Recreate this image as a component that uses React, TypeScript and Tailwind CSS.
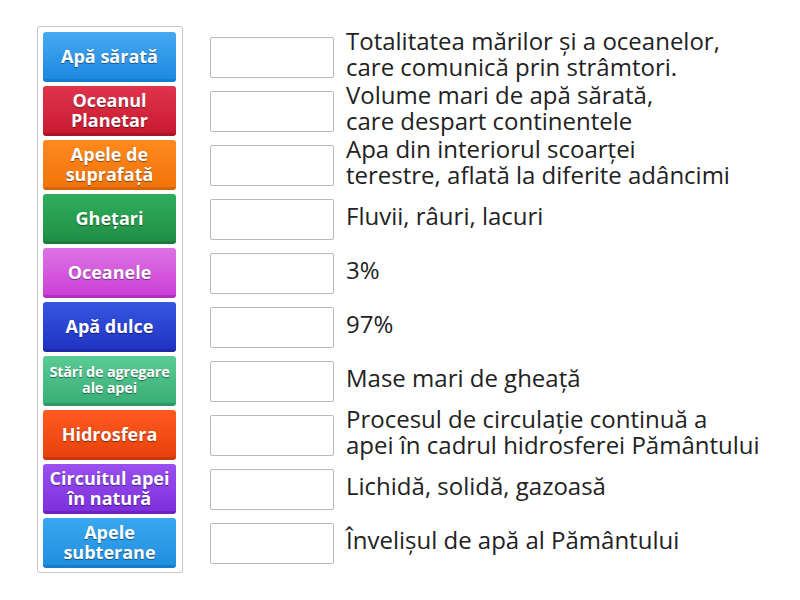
const tiles = [
  { label: "Apă sărată", cls: "from-[#46a9f2] to-[#1c8ae0] border-[#157cd0]" },
  { label: "Oceanul Planetar", cls: "from-[#e0344e] to-[#c8192f] border-[#a9142a]" },
  { label: "Apele de suprafață", cls: "from-[#ff8a1e] to-[#f27408] border-[#d66306]" },
  { label: "Ghețari", cls: "from-[#2fae5c] to-[#218f46] border-[#1c7a3b]" },
  { label: "Oceanele", cls: "from-[#dc72e4] to-[#cc3fd6] border-[#b030bb]" },
  { label: "Apă dulce", cls: "from-[#3656e0] to-[#2233c4] border-[#1b2aa6]" },
  { label: "Stări de agregare ale apei", cls: "from-[#5acb95] to-[#3aaf78] border-[#2f9765]", small: true },
  { label: "Hidrosfera", cls: "from-[#ff5a1f] to-[#e8420c] border-[#c9380a]" },
  { label: "Circuitul apei în natură", cls: "from-[#9a4ff0] to-[#7e2fdc] border-[#6a22c0]" },
  { label: "Apele subterane", cls: "from-[#3aa7f0] to-[#1f8fdf] border-[#177ccc]" },
];

const defs = [
  ["Totalitatea mărilor și a oceanelor,", "care comunică prin strâmtori."],
  ["Volume mari de apă sărată,", "care despart continentele"],
  ["Apa din interiorul scoarței", "terestre, aflată la diferite adâncimi"],
  ["Fluvii, râuri, lacuri"],
  ["3%"],
  ["97%"],
  ["Mase mari de gheață"],
  ["Procesul de circulație continuă a", "apei în cadrul hidrosferei Pământului"],
  ["Lichidă, solidă, gazoasă"],
  ["Învelișul de apă al Pământului"],
];

export default function App() {
  return (
    <div className="w-[800px] h-[600px] bg-white font-['Open_Sans',sans-serif] flex items-start pl-[37px] pt-[26px]">
      <div className="w-[146px] border border-[#c8c8c8] rounded-[3px] pl-[5px] pr-[6px] pt-[5px] pb-[4px] flex flex-col gap-[4px] shadow-[0_0_1px_rgba(0,0,0,0.15)]">
        {tiles.map((t) => (
          <div
            key={t.label}
            className={`h-[50px] rounded-[3px] bg-gradient-to-b border-b-[3px] flex items-center justify-center text-center text-white font-bold px-[2px] [text-shadow:0_1px_1px_rgba(0,0,0,0.45)] ${t.cls} ${
              t.small ? "text-[14.5px] leading-[16px] tracking-[-0.2px]" : "text-[18px] leading-[20px]"
            }`}
          >
            {t.label}
          </div>
        ))}
      </div>
      <div className="flex flex-col gap-[4px] pt-[6px] ml-[27px]">
        {defs.map((lines, i) => (
          <div key={i} className="h-[50px] flex items-center">
            <div className="w-[124px] h-[41px] border border-[#b9b9b9] rounded-[2px] bg-white shrink-0" />
            <p className="ml-[12px] text-[24px] leading-[26px] text-[#222] whitespace-nowrap -mt-[6px]">
              {lines[0]}
              {lines[1] && (
                <>
                  <br />
                  {lines[1]}
                </>
              )}
            </p>
          </div>
        ))}
      </div>
    </div>
  );
}
